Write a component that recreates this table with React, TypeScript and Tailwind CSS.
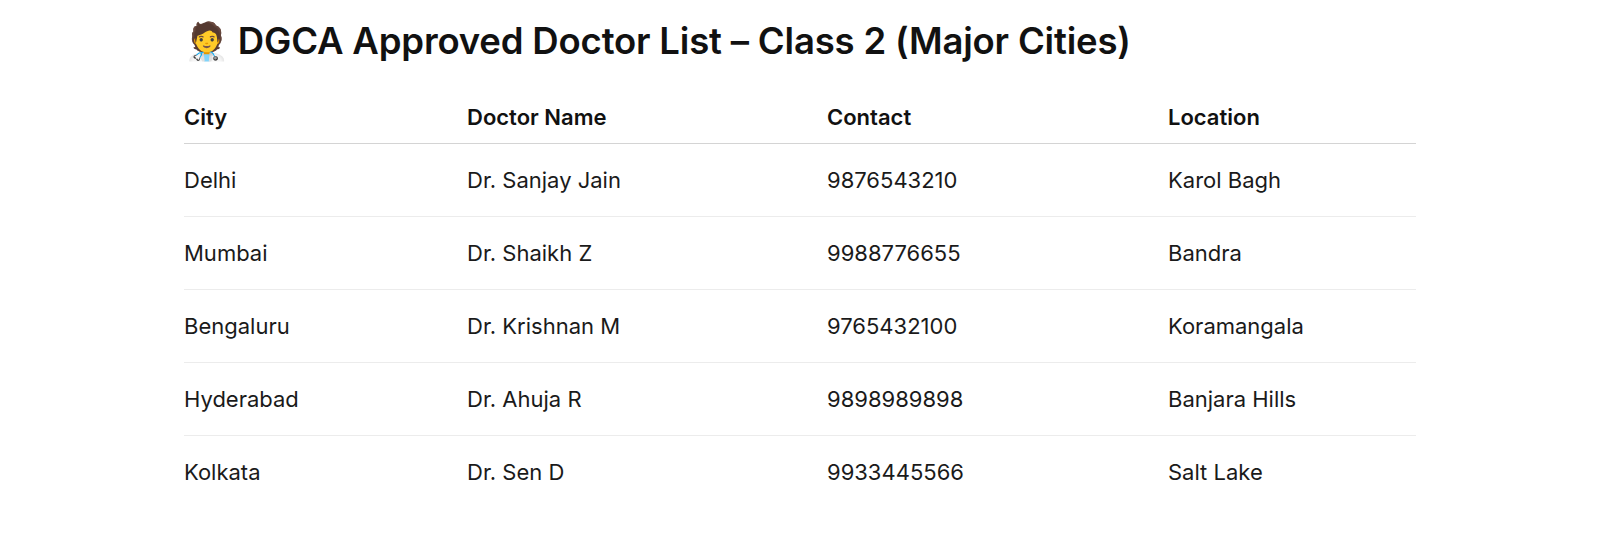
import React from "react";

type Row = { city: string; doctor: string; contact: string; location: string };

const rows: Row[] = [
  { city: "Delhi", doctor: "Dr. Sanjay Jain", contact: "9876543210", location: "Karol Bagh" },
  { city: "Mumbai", doctor: "Dr. Shaikh Z", contact: "9988776655", location: "Bandra" },
  { city: "Bengaluru", doctor: "Dr. Krishnan M", contact: "9765432100", location: "Koramangala" },
  { city: "Hyderabad", doctor: "Dr. Ahuja R", contact: "9898989898", location: "Banjara Hills" },
  { city: "Kolkata", doctor: "Dr. Sen D", contact: "9933445566", location: "Salt Lake" },
];

export default function App() {
  return (
    <div className="min-h-screen bg-white text-[#1a1a1a] font-['Inter','Noto_Sans',sans-serif]">
      <div className="max-w-7xl mx-auto px-6 pt-[21px]">
        <h1 className="text-[36.5px] leading-[40px] font-semibold tracking-[-0.005em] text-[#111]">
          🧑‍⚕️ DGCA Approved Doctor List – Class 2 (Major Cities)
        </h1>

        <table className="mt-[30px] w-full border-collapse text-left">
          <thead>
            <tr className="border-b border-[#d4d4d4]">
              <th className="w-[283px] pt-3 pb-3 text-[22px] leading-7 font-semibold text-[#111]">City</th>
              <th className="w-[360px] pt-3 pb-3 text-[22px] leading-7 font-semibold text-[#111]">Doctor Name</th>
              <th className="w-[341px] pt-3 pb-3 text-[22px] leading-7 font-semibold text-[#111]">Contact</th>
              <th className="pt-3 pb-3 text-[22px] leading-7 font-semibold text-[#111]">Location</th>
            </tr>
          </thead>
          <tbody>
            {rows.map((r, i) => (
              <tr key={r.city} className={i < rows.length - 1 ? "border-b border-[#ececec]" : ""}>
                <td className="py-[22px] text-[22px] leading-7">{r.city}</td>
                <td className="py-[22px] text-[22px] leading-7">{r.doctor}</td>
                <td className="py-[22px] text-[22px] leading-7">{r.contact}</td>
                <td className="py-[22px] text-[22px] leading-7">{r.location}</td>
              </tr>
            ))}
          </tbody>
        </table>
      </div>
    </div>
  );
}
